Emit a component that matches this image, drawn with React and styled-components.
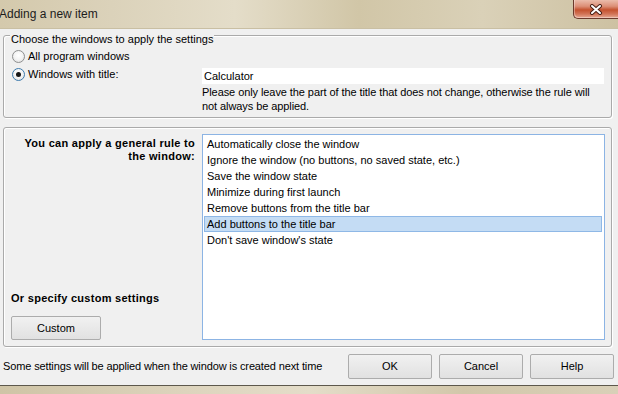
import React from 'react'
import styled, { createGlobalStyle } from 'styled-components'

const EstiloGlobal = createGlobalStyle`
  html, body {
    margin: 0;
    padding: 0;
  }
  body {
    background: #f0f0f0;
    font-family: 'Liberation Sans', Arial, sans-serif;
    font-size: 11px;
    color: #000;
  }
`

const Janela = styled.div`
  width: 618px;
  height: 394px;
  display: flex;
  flex-direction: column;
  overflow: hidden;
  background: #f0f0f0;
`
const BarraTitulo = styled.div`
  flex: none;
  height: 29px;
  display: flex;
  justify-content: space-between;
  align-items: flex-start;
  background: linear-gradient(90deg, #d4c9ac 0%, #dbd2ba 18%, #e4ddc9 38%, #d1c6a7 58%, #dad1b8 78%, #cdc1a2 100%);
  border-bottom: 1px solid #c9bfa3;
  box-sizing: border-box;
`
const TextoTitulo = styled.span`
  font-size: 12px;
  line-height: 29px;
  color: #1c1c1c;
  text-indent: -1px;
`
const BotaoFechar = styled.div`
  width: 45px;
  height: 19px;
  box-sizing: border-box;
  display: flex;
  align-items: center;
  justify-content: center;
  border: 1px solid #6b3a2c;
  border-top: none;
  border-right: none;
  border-bottom-left-radius: 5px;
  background: linear-gradient(180deg, #ebbcab 0%, #dc8f77 35%, #c4522f 55%, #d27457 78%, #e6ab95 100%);
  box-shadow: inset 1px -1px 0 rgba(255, 255, 255, 0.35);
`
const Corpo = styled.div`
  flex: 1;
  display: flex;
  flex-direction: column;
  padding: 0 5px 0 3px;
`
const CaixaGrupo = styled.div`
  position: relative;
  box-sizing: border-box;
  width: 609px;
  height: ${p => p.altura}px;
  margin-top: ${p => p.topo}px;
  border: 1px solid #aaaaaa;
  border-radius: 3px;
  box-shadow: 1px 1px 0 #ffffff, inset 1px 1px 0 #ffffff;
`
const Legenda = styled.span`
  position: absolute;
  top: -3px;
  left: 6px;
  padding: 0 1px;
  line-height: 13px;
  background: #f0f0f0;
`
const GradeJanelas = styled.div`
  display: grid;
  grid-template-columns: 190px 1fr;
  grid-template-rows: 17px 19px auto;
  padding: 12px 7px 0 8px;
`
const OpcaoRadio = styled.label`
  display: flex;
  align-items: center;
  gap: 3px;
  line-height: 13px;
`
const Radio = styled.span`
  width: 13px;
  height: 13px;
  box-sizing: border-box;
  border-radius: 50%;
  border: 1px solid ${p => (p.marcado ? '#3d7bad' : '#8e8f8f')};
  background: radial-gradient(circle at 50% 40%, #ffffff 0%, #f3f3f3 50%, #d9d9d9 100%);
  display: flex;
  align-items: center;
  justify-content: center;
  &::after {
    content: '';
    display: ${p => (p.marcado ? 'block' : 'none')};
    width: 5px;
    height: 5px;
    border-radius: 50%;
    background: #151515;
  }
`
const CampoTitulo = styled.input`
  align-self: end;
  height: 16px;
  box-sizing: border-box;
  border: none;
  padding: 0 2px;
  margin: 0;
  background: #fff;
  font-family: inherit;
  font-size: 11px;
  color: #000;
  outline: none;
`
const TextoAjuda = styled.div`
  grid-column: 2;
  margin-top: 1px;
  line-height: 14px;
  letter-spacing: -0.08px;
  white-space: nowrap;
`
const GradeRegras = styled.div`
  display: grid;
  grid-template-columns: 191px 403px;
  height: 100%;
  box-sizing: border-box;
  padding: 6px 6px 5px 7px;
`
const ColunaEsquerda = styled.div`
  display: flex;
  flex-direction: column;
  justify-content: space-between;
  padding-right: 7px;
`
const RotuloForte = styled.div`
  font-weight: bold;
  line-height: 13px;
  letter-spacing: 0.28px;
  text-align: ${p => (p.direita ? 'right' : 'left')};
  margin-top: ${p => (p.direita ? 3 : 0)}px;
  white-space: nowrap;
`
const BlocoCustom = styled.div`
  display: flex;
  flex-direction: column;
  gap: 11px;
  padding-bottom: 1px;
`
const Botao = styled.button`
  width: ${p => p.largura}px;
  height: ${p => p.altura}px;
  box-sizing: border-box;
  margin: 0;
  padding: 0;
  border: 1px solid #acacac;
  border-radius: 2px;
  background: linear-gradient(180deg, #f1f1f1 0%, #e9e9e9 50%, #e1e1e1 100%);
  font-family: inherit;
  font-size: 11px;
  color: #000;
`
const ListaRegras = styled.div`
  box-sizing: border-box;
  height: 206px;
  border: 1px solid #8cb4e4;
  background: #fff;
  padding: 1px 2px 1px 1px;
`
const ItemLista = styled.div`
  height: 16px;
  box-sizing: border-box;
  line-height: 14px;
  padding-left: 2px;
  border: 1px solid ${p => (p.selecionado ? '#8fb8e6' : 'transparent')};
  background: ${p => (p.selecionado ? '#c4dcf4' : 'transparent')};
  white-space: nowrap;
`
const Rodape = styled.div`
  flex: 1;
  display: flex;
  align-items: center;
  gap: 7px;
  margin-right: -1px;
`
const TextoStatus = styled.span`
  flex: 1;
  line-height: 14px;
  letter-spacing: -0.13px;
`
const MolduraInferior = styled.div`
  flex: none;
  height: 8px;
  border-top: 1px solid #5d584c;
  background: linear-gradient(90deg, #cfc4a6 0%, #ddd4bd 30%, #e4ddc9 50%, #d2c7aa 75%, #d9d0b8 100%);
`

const regras = [
  'Automatically close the window',
  'Ignore the window (no buttons, no saved state, etc.)',
  'Save the window state',
  'Minimize during first launch',
  'Remove buttons from the title bar',
  'Add buttons to the title bar',
  "Don't save window's state",
]

export default function App() {
  return (
    <>
      <EstiloGlobal />
      <Janela>
        <BarraTitulo>
          <TextoTitulo>Adding a new item</TextoTitulo>
          <BotaoFechar>
            <svg width="14" height="11" viewBox="0 0 14 11">
              <path d="M3 2 L11 9 M11 2 L3 9" stroke="#4a2016" strokeWidth="4" strokeLinecap="round" />
              <path d="M3 2 L11 9 M11 2 L3 9" stroke="#ffffff" strokeWidth="2" strokeLinecap="round" />
            </svg>
          </BotaoFechar>
        </BarraTitulo>
        <Corpo>
          <CaixaGrupo topo={6} altura={83}>
            <Legenda>Choose the windows to apply the settings</Legenda>
            <GradeJanelas>
              <OpcaoRadio>
                <Radio />
                All program windows
              </OpcaoRadio>
              <span />
              <OpcaoRadio>
                <Radio marcado />
                Windows with title:
              </OpcaoRadio>
              <CampoTitulo defaultValue="Calculator" />
              <TextoAjuda>
                Please only leave the part of the title that does not change, otherwise the rule will
                <br />
                not always be applied.
              </TextoAjuda>
            </GradeJanelas>
          </CaixaGrupo>
          <CaixaGrupo topo={9} altura={220}>
            <GradeRegras>
              <ColunaEsquerda>
                <RotuloForte direita>
                  You can apply a general rule to
                  <br />
                  the window:
                </RotuloForte>
                <BlocoCustom>
                  <RotuloForte>Or specify custom settings</RotuloForte>
                  <Botao largura={90} altura={24}>Custom</Botao>
                </BlocoCustom>
              </ColunaEsquerda>
              <ListaRegras>
                {regras.map((r, i) => (
                  <ItemLista key={r} selecionado={i === 5}>{r}</ItemLista>
                ))}
              </ListaRegras>
            </GradeRegras>
          </CaixaGrupo>
          <Rodape>
            <TextoStatus>Some settings will be applied when the window is created next time</TextoStatus>
            <Botao largura={84} altura={25}>OK</Botao>
            <Botao largura={84} altura={25}>Cancel</Botao>
            <Botao largura={84} altura={25}>Help</Botao>
          </Rodape>
        </Corpo>
        <MolduraInferior />
      </Janela>
    </>
  )
}
